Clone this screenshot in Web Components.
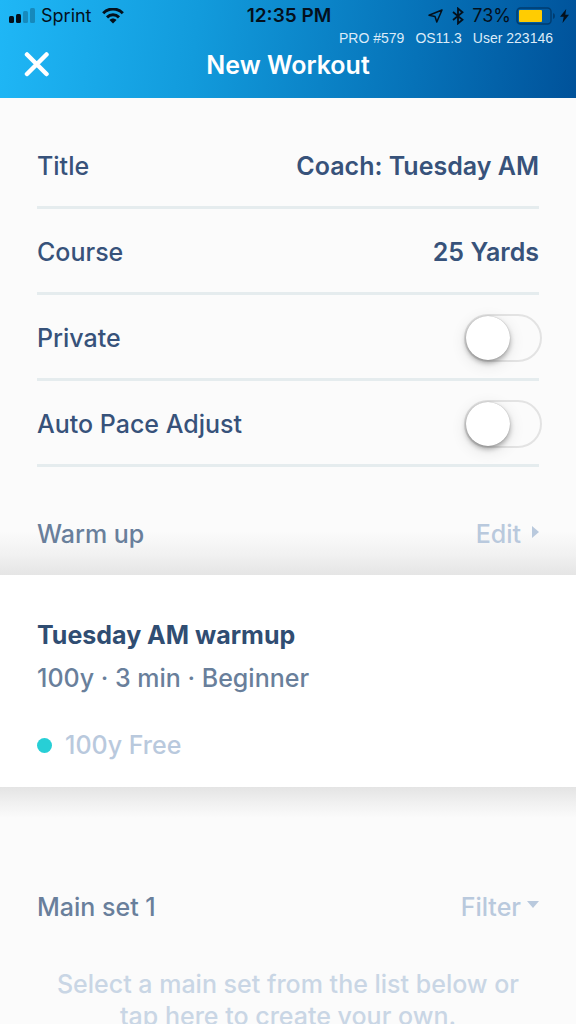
<!DOCTYPE html>
<html lang="en">
<head>
<meta charset="utf-8">
<meta name="viewport" content="width=device-width, initial-scale=1">
<title>New Workout</title>
<style>
  html, body { margin: 0; height: 100%; }
  body {
    --ink: #37527a;
    --ink-strong: #304d72;
    --muted: #697f9b;
    --faint: #b9c9dd;
    --fainter: #c9d6e5;
    --rule: #e5ecee;
    --page: #fbfbfb;
    --gutter: 37px;
    font-family: Inter, "Liberation Sans", sans-serif;
    font-size: 25px;
    line-height: 32px;
    color: var(--ink);
    background: var(--page);
  }
</style>
</head>
<body>
<workout-app></workout-app>
<script>
function define(name, html, setup) {
  const template = document.createElement('template');
  template.innerHTML = html;
  customElements.define(name, class extends HTMLElement {
    constructor() {
      super();
      this.attachShadow({ mode: 'open' }).append(template.content.cloneNode(true));
    }
    connectedCallback() {
      if (setup) setup(this, this.shadowRoot);
    }
  });
}

define('status-bar', `
  <style>
    :host { display: grid; grid-template-columns: 1fr auto 1fr; align-items: center; height: 32px;
      padding: 0 7px 0 9px; color: #04101c; font-size: 18px; line-height: 24px; }
    div { display: flex; align-items: center; }
    .right { justify-content: flex-end; }
    .time { font-size: 19px; font-weight: 600; }
    .carrier { margin: 0 10px 0 6px; }
    .pct { margin: 0 5px 0 8px; }
    svg { display: block; flex: none; }
    .bolt { margin-left: 4px; }
    .bt { margin-left: 9px; }
  </style>
  <div>
    <svg width="26" height="16" viewBox="0 0 26 16" fill="currentColor" aria-hidden="true">
      <rect x="0" y="8" width="5" height="7" rx="1.5"/><rect x="7" y="6" width="5" height="9" rx="1.5"/>
      <rect x="14" y="3" width="5" height="12" rx="1.5" opacity=".25"/><rect x="21" y="0" width="5" height="15" rx="1.5" opacity=".25"/>
    </svg>
    <span class="carrier">Sprint</span>
    <svg width="22" height="16" viewBox="0 0 22 16" fill="none" stroke="currentColor" stroke-width="3" aria-hidden="true">
      <path d="M1.2 5.2C6.700 -.4 15.300 -.4 20.800 5.200"/><path d="M5 9.300C8.400 6 13.600 6 17 9.300"/>
      <path d="M7.500 12C9.500 10 12.500 10 14.500 12L11 15.500Z" fill="currentColor" stroke="none"/>
    </svg>
  </div>
  <span class="time">12:35 PM</span>
  <div class="right">
    <svg width="15" height="14" viewBox="0 0 15 14" fill="none" stroke="currentColor" stroke-width="1.5" stroke-linejoin="round" aria-hidden="true">
      <path d="M14 1L1 6.300L7 7.500L8.800 13Z"/>
    </svg>
    <svg class="bt" width="12" height="18" viewBox="0 0 12 18" fill="none" stroke="currentColor" stroke-width="1.8" aria-hidden="true">
      <path d="M1 5L10.500 12.800L6 16.500V1.500L10.500 5.200L1 13"/>
    </svg>
    <span class="pct">73%</span>
    <svg width="40" height="18" viewBox="0 0 40 18" aria-hidden="true">
      <rect x="1" y="1" width="34" height="16" rx="3.500" fill="none" stroke="#003c70" stroke-width="1.500"/>
      <rect x="3" y="3" width="23" height="12" rx="1" fill="#ffcc02"/>
      <path d="M37 6Q39 6.500 39 9Q39 11.500 37 12Z" fill="#003c70"/>
    </svg>
    <svg class="bolt" width="9" height="14" viewBox="0 0 9 14" fill="currentColor" aria-hidden="true"><path d="M6.200 0L0 7.700H3.700L2.500 14L9 5.700H5.300Z"/></svg>
  </div>
`);

define('build-info', `
  <style>
    :host { display: flex; justify-content: flex-end; gap: 11px; padding-right: 23px;
      font: 14px/16px "Liberation Sans", sans-serif; color: #dcebf8; height: 12px; align-items: center; }
  </style>
  <span>PRO #579</span><span>OS11.3</span><span>User 223146</span>
`);

define('app-header', `
  <style>
    :host { display: block; flex: none; padding-bottom: 12px; box-sizing: border-box;
      background: linear-gradient(97deg, #1fb7f6 0%, #129bdc 34%, #0672b8 72%, #00529a 100%); color: #fff; }
    nav { display: grid; grid-template-columns: 1fr auto 1fr; align-items: center; height: 42px; padding: 0 24px; }
    button { all: unset; justify-self: start; width: 26px; height: 28px; cursor: pointer; }
    svg { display: block; }
    h1 { margin: 0; font-size: 25px; line-height: 32px; font-weight: 600; }
  </style>
  <status-bar></status-bar>
  <build-info></build-info>
  <nav>
    <button type="button" aria-label="Close">
      <svg width="26" height="26" viewBox="0 0 26 26" fill="none" stroke="#fff" stroke-width="4.500" stroke-linecap="round"><path d="M3 2.500L22.500 22M22.500 2.500L3 22"/></svg>
    </button>
    <h1>New Workout</h1>
  </nav>
`);

define('form-row', `
  <style>
    :host { display: flex; align-items: center; justify-content: space-between; gap: 16px; height: 81px;
      padding-top: 2px; border-bottom: 3px solid var(--rule); }
    label { flex: none; font-weight: 500; }
    input, select { appearance: none; border: 0; padding: 0; margin: 0; background: none; color: inherit;
      font: inherit; font-weight: 600; outline: none; }
    input[type=text] { flex: 1; min-width: 0; text-align: right; }
    select { text-align-last: right; }
    input[type=checkbox] { flex: none; box-sizing: border-box; width: 78px; height: 48px; padding: 0;
      border: 2px solid #e3e3e3; border-radius: 24px; margin-right: -3px; }
    input[type=checkbox]::before { content: ""; display: block; width: 44px; height: 44px; border-radius: 50%;
      background: #fff; box-shadow: 0 3px 5px rgba(0,0,0,.3), 0 4px 16px rgba(0,0,0,.12), 0 0 1px rgba(0,0,0,.3); }
    input[type=checkbox]:checked::before { margin-left: 30px; }
  </style>
  <label for="control"></label>
`, (host, root) => {
  const label = root.querySelector('label');
  label.textContent = host.getAttribute('label');
  const kind = host.getAttribute('kind');
  const control = document.createElement(kind === 'select' ? 'select' : 'input');
  control.id = 'control';
  if (kind === 'select') {
    control.add(new Option(host.getAttribute('value')));
  } else if (kind === 'switch') {
    control.type = 'checkbox';
    control.setAttribute('role', 'switch');
  } else {
    control.type = 'text';
    control.value = host.getAttribute('value');
  }
  root.append(control);
});

define('section-header', `
  <style>
    :host { display: flex; align-items: center; justify-content: space-between; padding: 0 var(--gutter);
      color: var(--muted); }
    h2 { margin: 0; font-size: 25px; font-weight: 500; line-height: 32px; }
    button { all: unset; cursor: pointer; display: flex; align-items: center; color: var(--faint); font-weight: 500; }
  </style>
  <h2><slot></slot></h2>
  <button type="button"><slot name="action"></slot></button>
`);

define('workout-card', `
  <style>
    :host { display: block; box-sizing: border-box; background: #fff; padding: 44px var(--gutter) 26px; }
    h3 { margin: 0; font-size: 25px; line-height: 32px; font-weight: 700; color: var(--ink-strong); }
    p { margin: 11px 0 0; color: var(--muted); font-weight: 500; }
    ul { list-style: none; margin: 35px 0 0; padding: 0; color: var(--faint); font-weight: 500; }
    li { display: flex; align-items: center; gap: 13px; }
    li::before { content: ""; width: 15px; height: 15px; border-radius: 50%; background: #27cfd6; }
  </style>
  <h3><slot name="title"></slot></h3>
  <p><slot name="summary"></slot></p>
  <ul><li><slot></slot></li></ul>
`);

define('workout-app', `
  <style>
    :host { display: flex; flex-direction: column; height: 100%; }
    main { flex: 1; min-height: 0; overflow-y: auto; scrollbar-width: none; }
    form { padding: 25px var(--gutter) 0; }
    .above { padding: 51px 0 25px; background: linear-gradient(to top, #e5e5e5, #f1f1f1 20px, #fbfbfb 44px, transparent 45px); }
    .below { padding: 104px 0 45px; background: linear-gradient(#e4e4e4, #f0f0f0 15px, #fbfbfb 31px, transparent 32px); }
    .empty { margin: 0; padding: 0 var(--gutter) 32px; color: var(--fainter); text-align: center; font-weight: 500; }
    svg { display: block; }
    .right { margin-left: 11px; margin-bottom: 4px; }
    .down { margin-left: 6px; margin-bottom: 5px; }
  </style>
  <app-header></app-header>
  <main>
    <form>
      <form-row label="Title" kind="text" value="Coach: Tuesday AM"></form-row>
      <form-row label="Course" kind="select" value="25 Yards"></form-row>
      <form-row label="Private" kind="switch"></form-row>
      <form-row label="Auto Pace Adjust" kind="switch"></form-row>
    </form>
    <div class="above">
      <section-header>Warm up
        <span slot="action">Edit</span>
        <svg slot="action" class="right" width="7" height="12" viewBox="0 0 7 12" fill="currentColor" aria-hidden="true"><path d="M0 0L7 6L0 12Z"/></svg>
      </section-header>
    </div>
    <workout-card>
      <span slot="title">Tuesday AM warmup</span>
      <span slot="summary">100y · 3 min · Beginner</span>
      100y Free
    </workout-card>
    <div class="below">
      <section-header>Main set 1
        <span slot="action">Filter</span>
        <svg slot="action" class="down" width="12" height="7" viewBox="0 0 12 7" fill="currentColor" aria-hidden="true"><path d="M0 0H12L6 7Z"/></svg>
      </section-header>
    </div>
    <p class="empty">Select a main set from the list below or tap here to create your own.</p>
  </main>
`);
</script>
</body>
</html>
